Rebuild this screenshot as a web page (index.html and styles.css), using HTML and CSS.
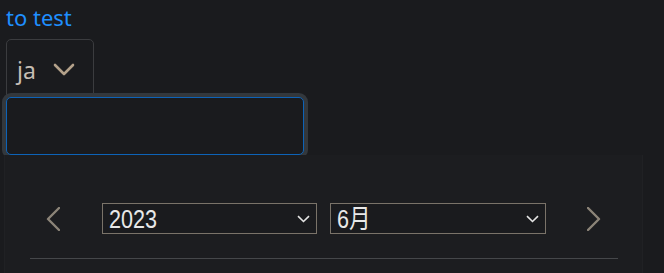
FILE: index.html
```html
<!DOCTYPE html>
<html lang="ja">
<head>
<meta charset="utf-8">
<title>Date picker test</title>
<link rel="stylesheet" href="styles.css">
</head>
<body>
<div class="top">
  <a class="link" href="#">to test</a>
</div>
<div class="lang-select">
  <span class="lang-text">ja</span>
  <svg class="lang-chev" width="22" height="13" viewBox="0 0 22 13"><polyline points="2,2 11,11 20,2" fill="none" stroke="#b3a18a" stroke-width="2.6" stroke-linecap="round" stroke-linejoin="round"/></svg>
</div>
<div class="date-input"></div>
<div class="picker">
  <div class="picker-head">
    <svg class="nav-arrow" width="14" height="24" viewBox="0 0 14 24"><polyline points="13,1 2,12 13,23" fill="none" stroke="#8c8478" stroke-width="2.4" stroke-linecap="round" stroke-linejoin="round"/></svg>
    <div class="sel sel-year">
      <span class="sel-text">2023</span>
      <svg class="sel-chev" width="13" height="8" viewBox="0 0 13 8"><polyline points="1,1.2 6.5,6.5 12,1.2" fill="none" stroke="#e4e4e4" stroke-width="1.6"/></svg>
    </div>
    <div class="sel sel-month">
      <span class="sel-text">6月</span>
      <svg class="sel-chev" width="13" height="8" viewBox="0 0 13 8"><polyline points="1,1.2 6.5,6.5 12,1.2" fill="none" stroke="#e4e4e4" stroke-width="1.6"/></svg>
    </div>
    <svg class="nav-arrow nav-next" width="14" height="24" viewBox="0 0 14 24"><polyline points="1,1 12,12 1,23" fill="none" stroke="#8c8478" stroke-width="2.4" stroke-linecap="round" stroke-linejoin="round"/></svg>
  </div>
  <div class="divider"></div>
</div>
</body>
</html>
```

FILE: styles.css
```css
html, body {
  margin: 0;
  padding: 0;
  background: #1a1b1e;
  height: 100%;
  overflow: hidden;
}
body {
  padding: 0 6px;
  font-family: "Noto Sans", "Open Sans", sans-serif;
}
.top {
  height: 39px;
  box-sizing: border-box;
  padding-top: 2px;
}
.link {
  color: #1f8fff;
  text-decoration: none;
  font-size: 22px;
  line-height: 30px;
}
.lang-select {
  width: 88px;
  height: 60px;
  box-sizing: border-box;
  border: 1px solid #3b3c3f;
  border-radius: 5px;
  display: flex;
  align-items: flex-start;
  padding: 14px 0 0 10px;
  gap: 17px;
}
.lang-text {
  color: #c6beb4;
  font-size: 23px;
  line-height: 32px;
}
.lang-chev {
  margin-top: 9px;
}
.date-input {
  margin-top: -2px;
  width: 298px;
  height: 58px;
  box-sizing: border-box;
  border: 1.5px solid #0d63b8;
  border-radius: 5px;
  background: #1a1b1e;
  box-shadow: 0 0 0 4px #33383d;
}
.picker {
  margin-left: -1px;
  width: 637px;
  height: 130px;
  box-sizing: border-box;
  background: #1c1d20;
  box-shadow: 1px 0 0 #202124, -1px 0 0 #202124;
  padding: 48px 24px 0 25px;
}
.picker-head {
  display: flex;
  align-items: center;
  height: 31px;
  padding: 0 17px 0 16px;
}
.nav-arrow {
  flex: none;
  margin-top: 1px;
}
.sel {
  height: 31px;
  box-sizing: border-box;
  border: 1px solid #7a7369;
  background: #1a1b1e;
  display: flex;
  align-items: center;
  justify-content: space-between;
  padding: 0 6px 0 6px;
}
.sel-year {
  width: 215px;
  margin-left: 42px;
}
.sel-month {
  width: 216px;
  margin-left: 13px;
  margin-right: 41px;
}
.sel-text {
  color: #e8e8e8;
  font-family: "Liberation Sans", "Noto Sans CJK JP", sans-serif;
  font-size: 26px;
  line-height: 30px;
  margin-top: 1px;
  transform: scaleX(0.83);
  transform-origin: left center;
}
.sel-chev {
  margin-top: 1px;
}
.divider {
  margin-top: 24px;
  height: 1px;
  background: #45474a;
}
```
